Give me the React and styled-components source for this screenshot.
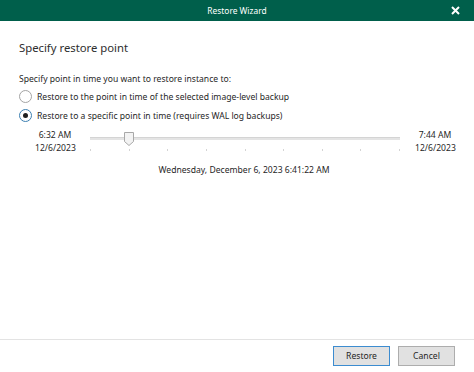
import React from 'react'
import styled, { createGlobalStyle } from 'styled-components'

const Global = createGlobalStyle`
  *, *::before, *::after { box-sizing: border-box; }
  html, body { margin: 0; padding: 0; background: #fff; }
  body { font-family: "Noto Sans", "Open Sans", sans-serif; color: #1f1f1f; }
`

const Window = styled.div`
  width: 474px;
  height: 372px;
  display: flex;
  flex-direction: column;
  background: #fff;
  overflow: hidden;
`

const TitleBar = styled.div`
  height: 21px;
  flex-shrink: 0;
  background: #005f4b;
  color: #fff;
  display: flex;
  align-items: center;
  justify-content: center;
  position: relative;
  font-size: 8.4px;
`

const Close = styled.span`
  position: absolute;
  right: 14px;
  top: 6px;
  width: 9px;
  height: 9px;
  display: flex;
`

const Body = styled.div`
  flex: 1;
  padding: 0 19px;
  display: flex;
  flex-direction: column;
`

const Heading = styled.div`
  font-size: 11.3px;
  color: #2e2e2e;
  margin-top: 18px;
  line-height: 18px;
`

const Prompt = styled.div`
  font-size: 8.6px;
  margin-top: 14px;
  line-height: 16px;
`

const Option = styled.label`
  display: flex;
  align-items: center;
  gap: 5px;
  height: 19px;
  font-size: 8.6px;
`

const Radio = styled.span`
  width: 13px;
  height: 13px;
  border-radius: 50%;
  border: 1px solid ${p => (p.$checked ? '#3c7fb1' : '#a4a4a4')};
  background: #fff;
  display: flex;
  align-items: center;
  justify-content: center;
  &::after {
    content: '';
    width: 5px;
    height: 5px;
    border-radius: 50%;
    background: ${p => (p.$checked ? '#1f1f1f' : 'transparent')};
  }
`

const SliderRow = styled.div`
  display: grid;
  grid-template-columns: 40px 1fr 40px;
  column-gap: 15px;
  align-items: start;
  margin-top: 4px;
  padding-left: 16px;
`

const Stamp = styled.div`
  font-size: 8.6px;
  line-height: 13px;
  text-align: center;
  white-space: nowrap;
  color: #1f1f1f;
`

const Track = styled.div`
  position: relative;
  height: 26px;
`

const Rail = styled.div`
  position: absolute;
  left: 0;
  right: 0;
  top: 8px;
  height: 3px;
  background: #e4e4e4;
  border-top: 1px solid #d4d4d4;
`

const Ticks = styled.div`
  position: absolute;
  left: 0;
  right: 0;
  top: 20px;
  display: flex;
  justify-content: space-between;
  & > span {
    width: 1px;
    height: 2px;
    background: #d4d4d4;
  }
`

const Thumb = styled.svg`
  position: absolute;
  top: 3px;
`

const Current = styled.div`
  text-align: center;
  font-size: 8.6px;
  line-height: 14px;
  margin-top: 8px;
  padding-left: 14px;
`

const Footer = styled.div`
  flex-shrink: 0;
  border-top: 1px solid #e3e3e3;
  height: 33px;
  display: flex;
  justify-content: flex-end;
  align-items: flex-start;
  gap: 8px;
  padding: 6px 19px 0 0;
`

const Button = styled.button`
  width: 57px;
  height: 20px;
  font-family: inherit;
  font-size: 8.6px;
  color: #1f1f1f;
  background: #e1e1e1;
  border: 1px solid ${p => (p.$primary ? '#3c8cd0' : '#adadad')};
  padding: 0;
`

export default function App() {
  return (
    <Window>
      <Global />
      <TitleBar>
        Restore Wizard
        <Close>
          <svg width="9" height="9" viewBox="0 0 9 9">
            <path d="M1 1 L8 8 M8 1 L1 8" stroke="#fff" strokeWidth="2" />
          </svg>
        </Close>
      </TitleBar>
      <Body>
        <Heading>Specify restore point</Heading>
        <Prompt>Specify point in time you want to restore instance to:</Prompt>
        <Option>
          <Radio />
          Restore to the point in time of the selected image-level backup
        </Option>
        <Option>
          <Radio $checked />
          Restore to a specific point in time (requires WAL log backups)
        </Option>
        <SliderRow>
          <Stamp>6:32 AM<br />12/6/2023</Stamp>
          <Track>
            <Rail />
            <Ticks>
              {Array.from({ length: 9 }).map((_, i) => <span key={i} />)}
            </Ticks>
            <Thumb width="10" height="14" viewBox="0 0 10 14" style={{ left: 'calc(12.5% - 5px)' }}>
              <path d="M0.5 0.5 H9.5 V9.5 L5 13.5 L0.5 9.5 Z" fill="#f3f3f3" stroke="#a8a8a8" />
            </Thumb>
          </Track>
          <Stamp>7:44 AM<br />12/6/2023</Stamp>
        </SliderRow>
        <Current>Wednesday, December 6, 2023 6:41:22 AM</Current>
      </Body>
      <Footer>
        <Button $primary>Restore</Button>
        <Button>Cancel</Button>
      </Footer>
    </Window>
  )
}
